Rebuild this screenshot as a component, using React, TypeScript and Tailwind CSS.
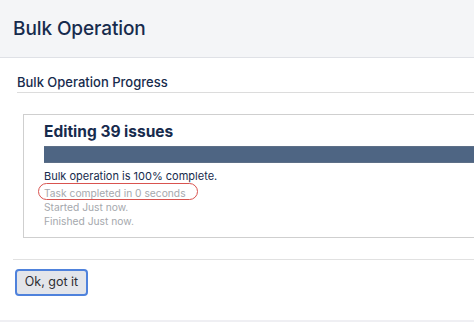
import React from "react";

export default function App() {
  return (
    <div
      className="w-[474px] h-[322px] overflow-hidden bg-white flex flex-col text-[#172b4d]"
      style={{ fontFamily: "Inter, 'Noto Sans', sans-serif" }}
    >
      <div className="h-[58px] shrink-0 bg-[#f4f5f7] border-b border-[#dfe1e6] flex items-center pl-[13px]">
        <h1 className="text-[19px] font-medium leading-none tracking-[-0.1px]">Bulk Operation</h1>
      </div>
      <div className="flex-1 flex flex-col">
        <div className="ml-[17px] mt-[16px] w-[520px] border-b border-[#dcdcdc] pb-[2px]">
          <h2 className="text-[13px] font-medium leading-[16px] text-[#172b4d]">Bulk Operation Progress</h2>
        </div>
        <div className="ml-[23px] mt-[21px] w-[520px] border border-[#cfcfcf] pl-[20px] pt-[7px] pb-[9px]">
          <div className="text-[15.5px] font-bold leading-[20px] text-[#172b4d]">Editing 39 issues</div>
          <div className="mt-[4px] h-[17px] bg-[#4e6583] border-y border-[#5d6f87]"></div>
          <div className="mt-[6px] text-[11px] leading-[14px] text-[#172b4d]">Bulk operation is 100% complete.</div>
          <div className="mt-[3px] text-[10.25px] leading-[14px] text-[#a5a8ad]">
            <div className="relative">
              Task completed in 0 seconds
              <span className="absolute left-[-6px] top-[-3px] w-[160px] h-[17px] rounded-full border border-[#d9534f]"></span>
            </div>
            <div>Started Just now.</div>
            <div>Finished Just now.</div>
          </div>
        </div>
        <div className="ml-[13px] mt-[21px] w-[520px] border-t border-[#e1e1e1]"></div>
        <div className="ml-[15px] mt-[8px]">
          <button className="w-[73px] h-[27px] rounded-[4px] bg-[#e3e5ea] border-2 border-[#4f82dc] text-[12.5px] text-[#2e2e33] leading-none">
            Ok, got it
          </button>
        </div>
        <div className="flex-1"></div>
        <div className="h-[2px] bg-[#efeff3]"></div>
      </div>
    </div>
  );
}
